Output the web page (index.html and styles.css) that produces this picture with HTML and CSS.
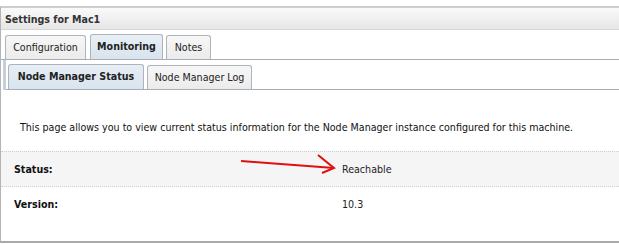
FILE: index.html
```html
<!DOCTYPE html>
<html>
<head>
<meta charset="utf-8">
<link rel="stylesheet" href="styles.css">
</head>
<body>
<div class="panel">
  <div class="header">Settings for Mac1</div>
  <div class="tabs">
    <div class="tab tab-config">Configuration</div>
    <div class="tab tab-monitor active">Monitoring</div>
    <div class="tab tab-notes">Notes</div>
  </div>
  <div class="subwrap">
    <div class="tabs subtabs">
      <div class="tab tab-nms active">Node Manager Status</div>
      <div class="tab tab-nml">Node Manager Log</div>
    </div>
  </div>
  <div class="content">
    <p class="intro">This page allows you to view current status information for the Node Manager instance configured for this machine.</p>
    <div class="row shaded">
      <div class="label">Status:</div>
      <div class="value">Reachable</div>
    </div>
    <div class="row">
      <div class="label">Version:</div>
      <div class="value">10.3</div>
    </div>
  </div>
  <svg class="arrow" width="120" height="40" viewBox="0 0 120 40">
    <path d="M5 13 L98 20" stroke="#e01010" stroke-width="2" fill="none"/>
    <path d="M82 7 L98 20 L86 25" stroke="#e01010" stroke-width="2" fill="none"/>
  </svg>
</div>
</body>
</html>
```
FILE: styles.css
```css
html, body {
  margin: 0;
  padding: 0;
  background: #ffffff;
}
body {
  font-family: "DejaVu Sans Condensed", "DejaVu Sans", sans-serif;
  font-size: 10.6px;
  color: #111;
  overflow: hidden;
}
.panel {
  position: relative;
  margin-top: 6px;
  border-top: 2px solid #cdcdcd;
  border-left: 1px solid #b4b4b4;
  border-bottom: 2px solid #a9a9a9;
  box-sizing: border-box;
  height: 237px;
}
.header {
  height: 22px;
  line-height: 22px;
  padding-left: 4px;
  padding-top: 1px;
  font-weight: bold;
  color: #333;
  background: linear-gradient(#fafafa, #e6e6e6);
  border-bottom: 1px solid #d6d6d6;
  box-sizing: border-box;
  line-height: 20px;
}
.tabs {
  display: flex;
  gap: 3px;
  margin-top: 5px;
  padding-left: 4px;
  border-bottom: 1px solid #a6aeb4;
  height: 25px;
  box-sizing: border-box;
  align-items: flex-end;
}
.tab {
  height: 24px;
  line-height: 23px;
  box-sizing: border-box;
  border: 1px solid #aeb4ba;
  border-bottom: none;
  border-radius: 3px 3px 0 0;
  background: linear-gradient(#f7f7f7, #ebebeb);
  color: #222;
  text-align: center;
}
.tab.active {
  background: linear-gradient(#e7eef5, #d9e4ee);
  font-weight: bold;
  height: 25px;
}
.tab-config { width: 81px; }
.tab-monitor { width: 73px; margin-left: 1px; }
.tab-notes { width: 45px; }
.subwrap {
  margin-left: 2px;
  border-left: 3px solid #c3d0dc;
}
.subwrap .subtabs {
  margin-top: 0;
  padding-top: 5px;
  height: 30px;
  padding-left: 2px;
}
.tab-nms { width: 136px; }
.tab-nml { width: 105px; }
.content {
  padding-top: 27px;
}
.intro {
  margin: 0 0 0 19px;
  height: 34px;
  line-height: 20px;
}
.row {
  display: flex;
  height: 34px;
  align-items: center;
  border-top: 1px dotted #cfcfcf;
}
.row.shaded {
  background: #f5f5f5;
  border-bottom: 1px dotted #cfcfcf;
}
.row + .row {
  border-top: none;
}
.label {
  width: 328px;
  padding-left: 13px;
  font-weight: bold;
}
.value {
  color: #222;
}
.arrow {
  position: absolute;
  left: 235px;
  top: 140px;
}
```
